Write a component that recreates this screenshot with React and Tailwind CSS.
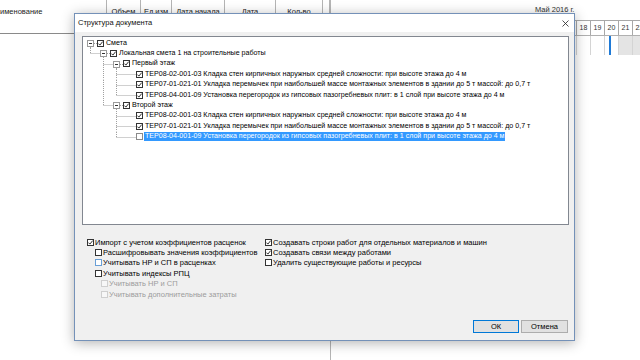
import React from "react";

const rows = [
  { level: 1, kids: true, checked: true, label: "Смета" },
  { level: 2, kids: true, last: true, checked: true, label: "Локальная смета 1 на строительные работы" },
  { level: 3, kids: true, checked: true, label: "Первый этаж" },
  { level: 4, cont: [2], checked: true, label: "ТЕР08-02-001-03 Кладка стен кирпичных наружных средней сложности: при высоте этажа до 4 м" },
  { level: 4, cont: [2], checked: true, label: "ТЕР07-01-021-01 Укладка перемычек при наибольшей массе монтажных элементов в здании до 5 т массой: до 0,7 т" },
  { level: 4, cont: [2], last: true, checked: true, label: "ТЕР08-04-001-09 Установка перегородок из гипсовых пазогребневых плит: в 1 слой при высоте этажа до 4 м" },
  { level: 3, kids: true, last: true, checked: true, label: "Второй этаж" },
  { level: 4, checked: true, label: "ТЕР08-02-001-03 Кладка стен кирпичных наружных средней сложности: при высоте этажа до 4 м" },
  { level: 4, checked: true, label: "ТЕР07-01-021-01 Укладка перемычек при наибольшей массе монтажных элементов в здании до 5 т массой: до 0,7 т" },
  { level: 4, last: true, selected: true, label: "ТЕР08-04-001-09 Установка перегородок из гипсовых пазогребневых плит: в 1 слой при высоте этажа до 4 м" },
];

const leftOptions = [
  { indent: 0, checked: true, label: "Импорт с учетом коэффициентов расценок" },
  { indent: 1, label: "Расшифровывать значения коэффициентов" },
  { indent: 1, hover: true, label: "Учитывать НР и СП в расценках" },
  { indent: 1, label: "Учитывать индексы РПЦ" },
  { indent: 2, disabled: true, label: "Учитывать НР и СП" },
  { indent: 2, disabled: true, label: "Учитывать дополнительные затраты" },
];

const rightOptions = [
  { checked: true, label: "Создавать строки работ для отдельных материалов и машин" },
  { checked: true, label: "Создавать связи между работами" },
  { label: "Удалить существующие работы и ресурсы" },
];

const columns = [
  { w: "w-[34px]", label: "Объем" },
  { w: "w-[31px]", label: "Ед.изм" },
  { w: "w-[53px]", label: "Дата начала" },
  { w: "w-[51px]", label: "Дата" },
  { w: "w-[47px]", label: "Кол-во" },
  { w: "w-[7px]", label: "" },
];

const days = Array.from({ length: 23 }, (_, i) => i + 1);
const weekends = [1, 7, 8, 14, 15, 21, 22];

function Check({ checked, disabled, hover, soft }) {
  let box = "border-[#333333] bg-white";
  if (disabled) box = "border-[#cfcfcf] bg-[#f7f7f7]";
  if (hover) box = "border-[#6a9fd6] bg-white";
  if (soft) box = "border-[#8a8a8a] bg-white";
  return (
    <span className={`flex h-[7px] w-[7px] shrink-0 items-center justify-center border ${box}`}>
      {checked && (
        <svg width="5" height="5" viewBox="0 0 5 5">
          <path d="M0.4 2.6 L1.9 4.1 L4.7 0.6" fill="none" stroke="#1a1a1a" strokeWidth="0.9" />
        </svg>
      )}
    </span>
  );
}

function TreeRow({ level, kids, last, cont = [], checked, label, selected }) {
  const x0 = 13 * (level - 1);
  const W = x0 + 10;
  const H = 10.4;
  const cx = (k) => 13 * (k - 1) + 3.5;
  const dot = { stroke: "#a0a0a0", strokeDasharray: "1 1", strokeWidth: 1 };

  return (
    <div className="flex h-[10.4px] items-center">
      <svg width={W} height={H} className="shrink-0">
        {cont.map((k) => (
          <line key={k} x1={cx(k)} y1={0} x2={cx(k)} y2={H} {...dot} />
        ))}
        {level > 1 && (
          <>
            <line x1={cx(level - 1)} y1={0} x2={cx(level - 1)} y2={last ? 5.5 : H} {...dot} />
            <line x1={cx(level - 1)} y1={5.5} x2={kids ? x0 : W} y2={5.5} {...dot} />
          </>
        )}
        {kids && (
          <>
            <line x1={x0 + 7} y1={5.5} x2={W} y2={5.5} {...dot} />
            <line x1={cx(level)} y1={9} x2={cx(level)} y2={H} {...dot} />
            <rect x={x0 + 0.5} y={2.5} width={6} height={6} fill="white" stroke="#9a9a9a" />
            <line x1={x0 + 2} y1={5.5} x2={x0 + 5} y2={5.5} stroke="#333" />
          </>
        )}
      </svg>
      <Check checked={checked} soft={selected} />
      <span
        className={`ml-[1px] h-[9px] whitespace-nowrap px-[1px] text-[7.1px] leading-[9px] ${
          selected ? "bg-[#3399ff] text-white" : "text-black"
        }`}
      >
        {label}
      </span>
    </div>
  );
}

function Option({ checked, disabled, hover, label, indent = 0 }) {
  const pad = indent === 0 ? "pl-0" : indent === 1 ? "pl-[8px]" : "pl-[14px]";
  return (
    <div className={`flex h-[10.4px] items-center ${pad}`}>
      <Check checked={checked} disabled={disabled} hover={hover} />
      <span className={`ml-[1px] whitespace-nowrap ${disabled ? "text-[#9c9c9c]" : "text-black"}`}>{label}</span>
    </div>
  );
}

export default function App() {
  return (
    <div className="relative h-[360px] w-[640px] overflow-hidden bg-white text-[7.5px] [font-family:'Liberation_Sans',Arial,sans-serif]">
      {/* background application */}
      <div className="flex h-full">
        <div className="h-full w-[331px] shrink-0 border-r border-[#b5b5b5]">
          <div className="flex h-[34px] border-b border-[#8a8a8a] text-[#222]">
            <div className="w-[107px] shrink-0 border-r border-[#b5b5b5] pt-[6px]">именование</div>
            {columns.map((c, i) => (
              <div key={i} className={`${c.w} shrink-0 border-r border-[#b5b5b5] pt-[6px] text-center`}>
                {c.label}
              </div>
            ))}
          </div>
        </div>
        <div className="flex-1 overflow-hidden">
          <div className="h-[20px] pl-[204px] pt-[4px] text-[#333]">Май 2016 г.</div>
          <div className="flex h-[15px] pl-[7px]">
            {days.map((d) => (
              <div
                key={d}
                className="flex h-[15px] w-[14px] shrink-0 items-center justify-center border-l border-t border-[#a8a8a8] text-[7px] text-[#333]"
              >
                {d}
              </div>
            ))}
          </div>
          <div className="flex h-[20px] border-t border-[#b0b0b0] pl-[7px]">
            {days.map((d) => (
              <div
                key={d}
                className={`h-full w-[14px] shrink-0 border-l border-[#d4d4d4] ${
                  weekends.includes(d) ? "bg-[#e4e4e4]" : "bg-white"
                }`}
              >
                {d === 20 && <div className="ml-[4px] h-full w-[2px] bg-[#1f7ad6]" />}
              </div>
            ))}
          </div>
        </div>
      </div>

      {/* dialog */}
      <div className="absolute left-[74px] top-[13px] flex h-[328px] w-[501px] flex-col border border-[#7491b8] bg-[#f0f0f0] shadow-[0_2px_12px_rgba(0,0,0,0.3)]">
        <div className="flex h-[18px] shrink-0 items-center justify-between bg-white pl-[3px] pr-[5px] text-[#111]">
          <span>Структура документа</span>
          <svg width="7" height="7" viewBox="0 0 7 7">
            <path d="M0.5 0.5 L6.5 6.5 M6.5 0.5 L0.5 6.5" stroke="#222" strokeWidth="0.8" />
          </svg>
        </div>

        <div className="flex flex-1 flex-col">
          <div className="ml-[7px] mt-[4px] h-[189px] w-[487px] border border-[#828790] bg-white pl-[4px] pt-[1px]">
            {rows.map((r, i) => (
              <TreeRow key={i} {...r} />
            ))}
          </div>

          <div className="mt-[12px] flex">
            <div className="w-[190px] shrink-0 pl-[12px]">
              {leftOptions.map((o, i) => (
                <Option key={i} {...o} />
              ))}
            </div>
            <div>
              {rightOptions.map((o, i) => (
                <Option key={i} {...o} />
              ))}
            </div>
          </div>

          <div className="mt-auto flex justify-end gap-[2px] pb-[7px] pr-[6px]">
            <button className="flex h-[13px] w-[46px] items-center justify-center border border-[#0078d7] bg-[#e1e1e1] text-black">
              ОК
            </button>
            <button className="flex h-[13px] w-[47px] items-center justify-center border border-[#adadad] bg-[#e1e1e1] text-black">
              Отмена
            </button>
          </div>
        </div>
      </div>
    </div>
  );
}
